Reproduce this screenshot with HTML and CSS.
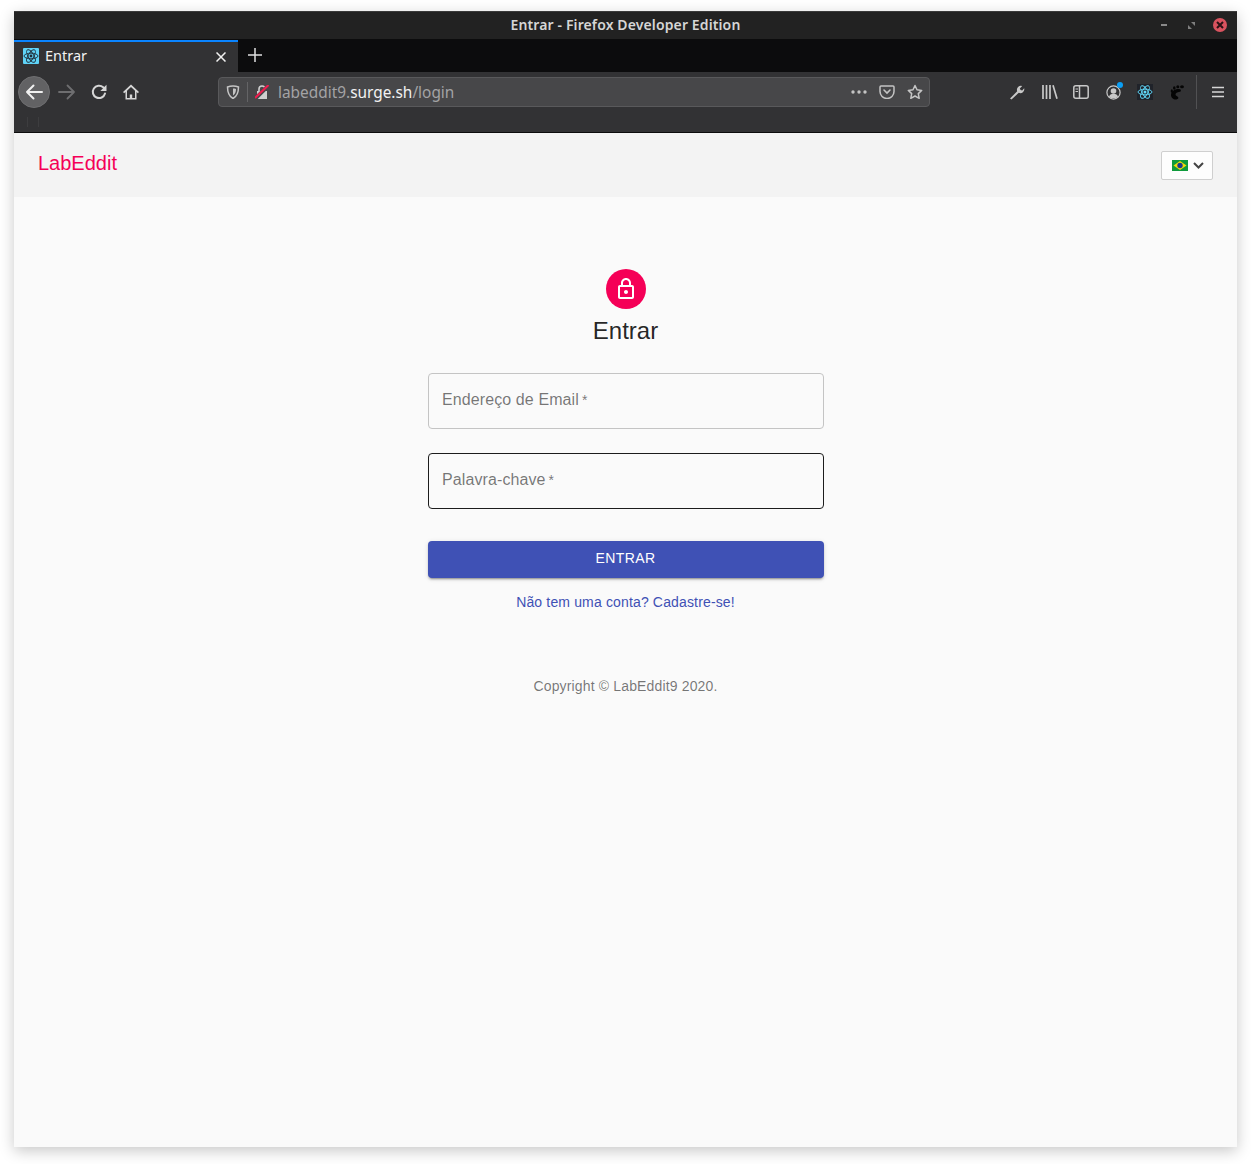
FILE: index.html
```html
<!DOCTYPE html>
<html lang="pt">
<head>
<meta charset="utf-8">
<title>Entrar</title>
<link rel="stylesheet" href="styles.css">
</head>
<body>
<div class="window">
  <header class="titlebar">
    <span class="title-text">Entrar - Firefox Developer Edition</span>
    <div class="wm-buttons">
      <span class="wm-min"></span>
      <svg class="wm-max" width="7" height="7" viewBox="0 0 7 7"><path d="M3 0h4v4zM0 3v4h4z" fill="#7f7f7f"/></svg>
      <span class="wm-close"><svg width="14" height="14" viewBox="0 0 14 14"><path d="M4 4l6 6M10 4l-6 6" stroke="#2a1215" stroke-width="2"/></svg></span>
    </div>
  </header>

  <div class="tabbar">
    <div class="tab">
      <svg class="favicon" width="16" height="16" viewBox="0 0 16 16"><rect width="16" height="16" rx="1" fill="#5fd3f7"/><g fill="none" stroke="#1f2d38" stroke-width=".9"><ellipse cx="8" cy="8" rx="7" ry="2.800"/><ellipse cx="8" cy="8" rx="7" ry="2.800" transform="rotate(60 8 8)"/><ellipse cx="8" cy="8" rx="7" ry="2.800" transform="rotate(120 8 8)"/></g><circle cx="8" cy="8" r="1.400" fill="#1f2d38"/></svg>
      <span class="tab-label">Entrar</span>
      <svg class="tab-close" width="10" height="10" viewBox="0 0 10 10"><path d="M.5.5l9 9M9.500.5l-9 9" stroke="#f2f2f2" stroke-width="1.500"/></svg>
    </div>
    <svg class="new-tab" width="14" height="14" viewBox="0 0 14 14"><path d="M7 0v14M0 7h14" stroke="#e0e0e0" stroke-width="1.500"/></svg>
  </div>

  <div class="toolbar">
    <div class="nav-row">
      <div class="nav-left">
        <span class="back-btn">
          <svg width="18" height="16" viewBox="0 0 18 16"><path d="M17 8H2M8.500 1.500 2 8l6.500 6.500" fill="none" stroke="#f0f0f0" stroke-width="2" stroke-linecap="round" stroke-linejoin="round"/></svg>
        </span>
        <span class="nav-btn nav-first">
          <svg width="18" height="16" viewBox="0 0 18 16"><path d="M1 8h15M9.500 1.500 16 8l-6.500 6.500" fill="none" stroke="#6e6e70" stroke-width="1.800" stroke-linecap="round" stroke-linejoin="round"/></svg>
        </span>
        <span class="nav-btn">
          <svg width="16" height="16" viewBox="0 0 16 16"><path d="M14 9.500A6.200 6.200 0 1 1 12.200 3.300L14 5" fill="none" stroke="#d6d6d6" stroke-width="2" stroke-linecap="round"/><path d="M15.500 .8v6.200H9.300z" fill="#d6d6d6"/></svg>
        </span>
        <span class="nav-btn">
          <svg width="16" height="16" viewBox="0 0 16 16"><path d="M8 .5 0 8l1.200 1.300L2.500 8.100V15.500h11V8.100l1.300 1.200L16 8zM6.800 14v-3.500h2.400V14H12V6.800L8 2.900 4 6.800V14z" fill="#d6d6d6" fill-rule="evenodd"/></svg>
        </span>
      </div>

      <div class="urlbar">
        <svg class="url-shield" width="14" height="14" viewBox="0 0 14 14"><path d="M7 1c2 0 4 .4 5.500 1 0 5-1 9-5.500 11.500C2.500 11 1.500 7 1.500 2 3 1.400 5 1 7 1z" fill="none" stroke="#c4c4c4" stroke-width="1.500"/><path d="M7 3.500c1 0 2 .1 3 .5 0 3-.8 5-3 6.500z" fill="#c4c4c4"/></svg>
        <span class="url-sep"></span>
        <svg class="url-lock" width="14" height="14" viewBox="0 0 14 14"><path d="M2 6h10v8H2z" fill="#cfcfcf"/><path d="M4 6V4a3 3 0 0 1 6 0v2" fill="none" stroke="#cfcfcf" stroke-width="1.600"/><path d="M14 0 .5 13.500" stroke="#474749" stroke-width="3.800"/><path d="M13.500 0 0 13" stroke="#f01c4e" stroke-width="2"/></svg>
        <span class="url-text">labeddit9.<span class="url-domain">surge.sh</span>/login</span>
        <svg class="url-dots" width="16" height="4" viewBox="0 0 16 4"><circle cx="2" cy="2" r="1.700" fill="#c4c4c4"/><circle cx="8" cy="2" r="1.700" fill="#c4c4c4"/><circle cx="14" cy="2" r="1.700" fill="#c4c4c4"/></svg>
        <svg class="url-pocket" width="16" height="14" viewBox="0 0 16 14"><path d="M2 1h12a1 1 0 0 1 1 1v4.500a7 7 0 0 1-14 0V2a1 1 0 0 1 1-1z" fill="none" stroke="#c4c4c4" stroke-width="1.500"/><path d="M5 5l3 3 3-3" fill="none" stroke="#c4c4c4" stroke-width="1.600" stroke-linecap="round"/></svg>
        <svg class="url-star" width="16" height="16" viewBox="0 0 16 16"><path d="M8 1.500l2 4.300 4.700.6-3.400 3.200.9 4.700L8 12l-4.200 2.300.9-4.700L1.300 6.400 6 5.800z" fill="none" stroke="#c4c4c4" stroke-width="1.500" stroke-linejoin="round"/></svg>
      </div>

      <div class="tools">
        <span class="tool">
          <svg width="16" height="16" viewBox="0 0 16 16"><path d="M1 14.500 8.200 7.200a4 4 0 0 1 5-5.200L10.800 4.400l.8 1.600 1.600.6 2-2.400a4 4 0 0 1-5.400 4.600L2.500 15.500z" fill="#c8c8c8"/></svg>
        </span>
        <span class="tool tool-library">
          <svg width="16" height="14" viewBox="0 0 16 14"><path d="M1 0v14M4.500 0v14M8 0v14M11 .3l4 13.400" stroke="#c8c8c8" stroke-width="1.700" fill="none"/></svg>
        </span>
        <span class="tool">
          <svg width="16" height="14" viewBox="0 0 16 14"><rect x=".8" y=".8" width="14.400" height="12.400" rx="2" fill="none" stroke="#c8c8c8" stroke-width="1.500"/><path d="M6.500 1v12" stroke="#c8c8c8" stroke-width="1.500"/><path d="M2.500 4h2.500M2.500 6.500h2.500" stroke="#c8c8c8"/></svg>
        </span>
        <span class="tool tool-account">
          <svg width="15" height="15" viewBox="0 0 15 15"><circle cx="7.500" cy="7.500" r="6.600" fill="none" stroke="#c8c8c8" stroke-width="1.200"/><circle cx="7.500" cy="6" r="2.800" fill="#c8c8c8"/><path d="M3 12c.5-2.500 2-3.200 4.500-3.200S11.500 9.500 12 12c-2.500 1.600-6.500 1.600-9 0z" fill="#c8c8c8"/></svg>
          <span class="notify-dot"></span>
        </span>
        <span class="tool">
          <svg width="16" height="16" viewBox="0 0 16 16"><rect width="16" height="16" fill="#20232a"/><g fill="none" stroke="#61dafb" stroke-width=".9"><ellipse cx="8" cy="8" rx="7" ry="2.800"/><ellipse cx="8" cy="8" rx="7" ry="2.800" transform="rotate(60 8 8)"/><ellipse cx="8" cy="8" rx="7" ry="2.800" transform="rotate(120 8 8)"/></g><circle cx="8" cy="8" r="1.500" fill="#61dafb"/></svg>
        </span>
        <span class="tool">
          <svg width="14" height="15" viewBox="0 0 14 15"><g fill="#050505"><path d="M8.500 4C4.500 4 1 6.500 1 10c0 3 3 5 5.500 4.500 1.500-.3 2.500-1.500 1.500-2.500-1.200-1.200-2.500-1-2.500-2.500S7.500 7 9 7c1.500 0 2.200-1 1.800-2-.3-.7-1.300-1-2.300-1z"/><ellipse cx="1.800" cy="6" rx="1.100" ry="1.700"/><ellipse cx="4.300" cy="3" rx="1.300" ry="1.700"/><ellipse cx="7.800" cy="1.800" rx="1.500" ry="1.500"/><ellipse cx="12" cy="1.800" rx="1.900" ry="1.500"/></g></svg>
        </span>
        <span class="tools-sep"></span>
        <span class="tool">
          <svg width="12" height="12" viewBox="0 0 12 12"><path d="M0 1.500h12M0 6h12M0 10.500h12" stroke="#d6d6d6" stroke-width="1.600"/></svg>
        </span>
      </div>
    </div>
    <div class="bookmarks-row"><span class="bm-mark"></span><span class="bm-mark"></span></div>
  </div>

  <div class="page">
    <div class="app-bar">
      <span class="brand">LabEddit</span>
      <button class="lang-btn" type="button">
        <svg width="16" height="11" viewBox="0 0 16 11"><rect width="16" height="11" fill="#0f9b3c"/><path d="M8 1 14.500 5.500 8 10 1.500 5.500z" fill="#f5d90a"/><circle cx="8" cy="5.500" r="2.700" fill="#1c3c8c"/></svg>
        <svg width="11" height="7" viewBox="0 0 11 7"><path d="M1 1l4.500 4.500L10 1" fill="none" stroke="#444" stroke-width="2"/></svg>
      </button>
    </div>

    <main class="auth">
      <span class="avatar">
        <svg width="24" height="24" viewBox="0 0 24 24"><path fill="#fff" d="M18 8h-1V6c0-2.760-2.240-5-5-5S7 3.240 7 6v2H6c-1.100 0-2 .9-2 2v10c0 1.100.9 2 2 2h12c1.100 0 2-.9 2-2V10c0-1.100-.9-2-2-2zM9 6c0-1.660 1.340-3 3-3s3 1.340 3 3v2H9V6zm9 14H6V10h12v10zm-6-3c1.100 0 2-.9 2-2s-.9-2-2-2-2 .9-2 2 .9 2 2 2z"/></svg>
      </span>
      <h1 class="auth-title">Entrar</h1>
      <form class="auth-form">
        <label class="field"><span class="field-label">Endereço de Email<span class="req">*</span></span></label>
        <label class="field field-active"><span class="field-label">Palavra-chave<span class="req">*</span></span></label>
        <button class="submit" type="button">ENTRAR</button>
        <a class="signup-link" href="#">Não tem uma conta? Cadastre-se!</a>
      </form>
      <p class="copyright">Copyright © LabEddit9 2020.</p>
    </main>
  </div>
</div>
</body>
</html>
```

FILE: styles.css
```css
html, body {
  margin: 0;
  height: 1164px;
  overflow: hidden;
  background: #fff;
}
body {
  padding: 11px 14px 17px;
  box-sizing: border-box;
  font-family: "Noto Sans", sans-serif;
}
* { box-sizing: border-box; }
.window {
  height: 1136px;
  display: flex;
  flex-direction: column;
  box-shadow: 0 4px 14px rgba(0, 0, 0, .22);
}

/* title bar */
.titlebar {
  height: 28px;
  flex: none;
  background: #222222;
  border-top: 1px solid #3a3a3a;
  display: flex;
  align-items: center;
  justify-content: center;
  position: relative;
}
.title-text {
  color: #d6d6d6;
  font-size: 14px;
  font-weight: 600;
  line-height: 28px;
  letter-spacing: .12px;
  margin-top: -2px;
}
.wm-buttons {
  position: absolute;
  right: 10px;
  top: 6px;
  display: flex;
  align-items: center;
  height: 14px;
}
.wm-min {
  width: 6px;
  height: 2px;
  background: #8a8a8a;
  margin-right: 21px;
  margin-left: -2px;
}
.wm-max { margin-right: 18px; }
.wm-close {
  width: 14px;
  height: 14px;
  border-radius: 50%;
  background: #d9535f;
  display: block;
}
.wm-close svg { display: block; }

/* tabs */
.tabbar {
  height: 33px;
  flex: none;
  background: #0c0c0d;
  display: flex;
  align-items: stretch;
}
.tab {
  width: 224px;
  background: #323234;
  border-top: 2px solid #0a84ff;
  margin-top: 1px;
  display: flex;
  align-items: center;
  padding-left: 9px;
  padding-bottom: 2px;
}
.favicon { flex: none; }
.tab-label {
  color: #f2f2f2;
  font-size: 14.500px;
  margin-left: 6px;
  margin-bottom: 1px;
  flex: 1;
  line-height: 1;
}
.tab-close { margin-right: 12px; margin-top: 2px; }
.new-tab { align-self: center; margin-left: 10px; margin-top: -1px; }

/* toolbar */
.toolbar {
  height: 61px;
  flex: none;
  background: #323234;
  border-bottom: 1px solid #0c0c0d;
}
.nav-row {
  height: 40px;
  display: flex;
  align-items: center;
}
.nav-left {
  width: 204px;
  flex: none;
  display: flex;
  align-items: center;
  padding-left: 4px;
}
.back-btn {
  width: 32px;
  height: 32px;
  border-radius: 50%;
  background: #626264;
  border: 1px solid #6f6f71;
  display: flex;
  align-items: center;
  justify-content: center;
}
.back-btn svg { margin-left: -1px; }
.nav-btn {
  width: 32px;
  display: flex;
  justify-content: center;
}
.nav-first { margin-left: 1px; }
.urlbar {
  width: 712px;
  height: 30px;
  flex: none;
  background: #474749;
  border: 1px solid #59595b;
  border-radius: 4px;
  display: flex;
  align-items: center;
  padding: 0 6px 0 7px;
}
.url-sep {
  width: 1px;
  height: 20px;
  background: #646466;
  margin: 0 7px 0 7px;
}
.url-lock { margin-right: 9px; }
.url-text {
  flex: 1;
  font-size: 15.400px;
  color: #a3a3a5;
  line-height: 1;
  margin-top: 1px;
}
.url-domain { color: #f2f2f2; }
.url-dots { margin-right: 12px; }
.url-pocket { margin-right: 12px; }
.tools {
  flex: 1;
  display: flex;
  align-items: center;
  padding-left: 71px;
}
.tool {
  width: 32px;
  height: 20px;
  display: flex;
  align-items: center;
  justify-content: center;
  position: relative;
}
.tool-library svg { margin-left: 1px; }
.notify-dot {
  position: absolute;
  top: 0;
  right: 6px;
  width: 6px;
  height: 6px;
  border-radius: 50%;
  background: #0a9ff5;
}
.tools-sep {
  width: 1px;
  height: 34px;
  background: #515153;
  margin-left: 3px;
  margin-right: 5px;
}
.bookmarks-row {
  height: 20px;
  display: flex;
  padding: 5px 0 0 13px;
  gap: 10px;
}
.bm-mark {
  width: 1px;
  height: 10px;
  background: #3d3d3f;
}

/* page */
.page {
  flex: 1;
  background: #fafafa;
  font-family: "Liberation Sans", Arial, sans-serif;
  display: flex;
  flex-direction: column;
}
.app-bar {
  height: 64px;
  flex: none;
  background: #f3f3f3;
  display: flex;
  align-items: center;
  justify-content: space-between;
  padding: 0 24px;
}
.brand {
  color: #f50057;
  font-size: 20px;
  line-height: 1;
  margin-top: -4px;
}
.lang-btn {
  width: 52px;
  height: 29px;
  background: #fdfdfd;
  border: 1px solid #cfcfcf;
  border-radius: 2px;
  padding: 0 0 0 10px;
  display: flex;
  align-items: center;
  gap: 5px;
  margin-top: 1px;
}
.auth {
  display: flex;
  flex-direction: column;
  align-items: center;
  padding-top: 72px;
}
.avatar {
  width: 40px;
  height: 40px;
  border-radius: 50%;
  background: #f50057;
  display: flex;
  align-items: center;
  justify-content: center;
}
.auth-title {
  margin: 6px 0 0;
  font-size: 24px;
  font-weight: 400;
  line-height: 32px;
  color: rgba(0, 0, 0, .87);
}
.auth-form {
  width: 396px;
  margin-top: 26px;
  display: flex;
  flex-direction: column;
}
.field {
  height: 56px;
  border: 1px solid #c4c4c4;
  border-radius: 4px;
  display: flex;
  align-items: center;
  padding: 0 13.500px 2px;
  margin-bottom: 24px;
}
.field-active { border-color: #1c1c1c; margin-bottom: 32px; }
.field-label {
  font-size: 16px;
  color: rgba(0, 0, 0, .54);
  line-height: 1;
  letter-spacing: .1px;
}
.req { margin-left: 3px; font-size: 14px; }
.submit {
  height: 37px;
  background: #3f51b5;
  color: #fff;
  border: 0;
  border-radius: 4px;
  font-family: "Liberation Sans", Arial, sans-serif;
  font-size: 14px;
  letter-spacing: .4px;
  padding: 0 0 3px;
  box-shadow: 0 3px 1px -2px rgba(0,0,0,.2), 0 2px 2px 0 rgba(0,0,0,.14), 0 1px 5px 0 rgba(0,0,0,.12);
}
.signup-link {
  margin-top: 14px;
  text-align: center;
  font-size: 14px;
  line-height: 20px;
  letter-spacing: .15px;
  color: #3f51b5;
  text-decoration: none;
}
.copyright {
  margin: 64px 0 0;
  font-size: 14px;
  line-height: 20px;
  letter-spacing: .15px;
  color: rgba(0, 0, 0, .54);
}
```
